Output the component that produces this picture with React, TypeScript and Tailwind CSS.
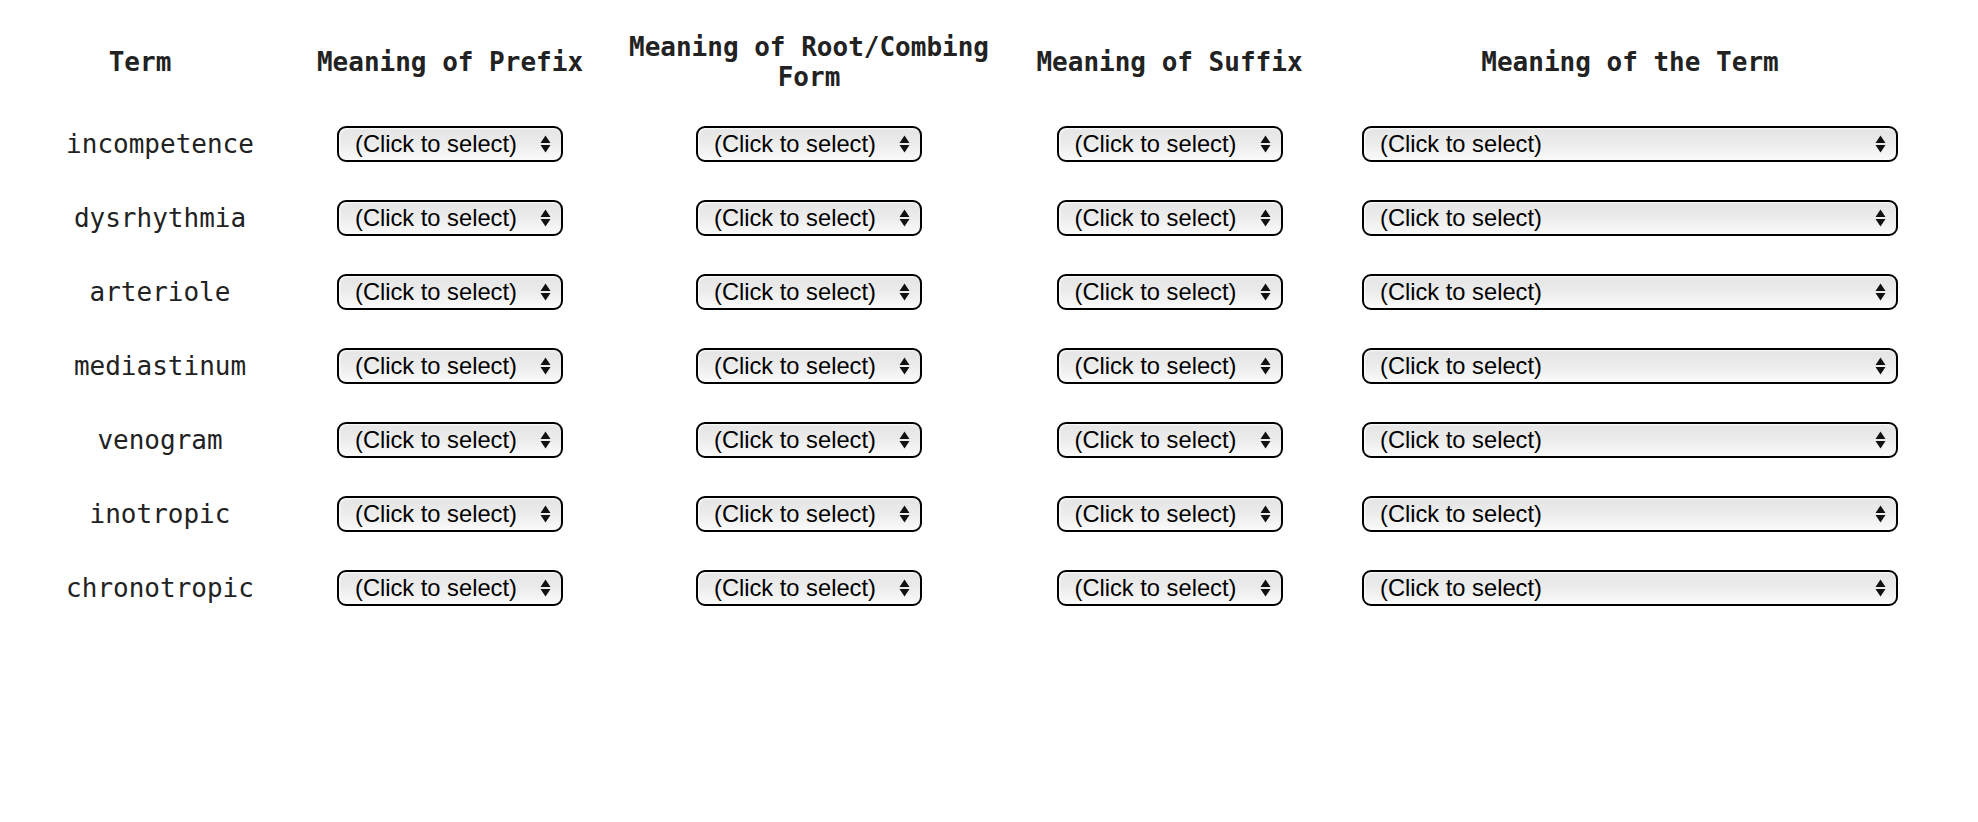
import React from "react"

const terms = [
  "incompetence",
  "dysrhythmia",
  "arteriole",
  "mediastinum",
  "venogram",
  "inotropic",
  "chronotropic",
]

const headers = [
  "Meaning of Prefix",
  "Meaning of Root/Combing Form",
  "Meaning of Suffix",
  "Meaning of the Term",
]

function Arrows() {
  return (
    <svg width="11" height="20" viewBox="0 0 11 20" className="shrink-0">
      <path d="M5.5 1.5 L10.5 9 L0.5 9 Z" fill="#111" />
      <path d="M0.5 11 L10.5 11 L5.5 18.5 Z" fill="#111" />
    </svg>
  )
}

function FakeSelect({ wide }: { wide?: boolean }) {
  return (
    <div
      className={`${wide ? "w-[536px]" : "w-[226px]"} h-[36px] flex items-center justify-between pl-[16px] pr-[10px] border-2 border-black rounded-[9px] bg-[linear-gradient(to_bottom,#e4e4e4_0%,#ebebeb_45%,#fafafa_100%)] shadow-[inset_1px_1px_2px_rgba(255,255,255,0.9)]`}
    >
      <span className="pt-[2px] text-[23.7px] leading-none text-black font-['Liberation_Sans',Arial,sans-serif]">
        (Click to select)
      </span>
      <Arrows />
    </div>
  )
}

export default function App() {
  return (
    <div className="w-[1978px] h-[822px] bg-white font-['DejaVu_Sans_Mono',monospace] text-[#222]">
      <div className="ml-[40px] pt-[16px] grid grid-cols-[240px_340px_378px_343px_578px]">
        <div className="h-[91px] flex items-center justify-center pr-[40px] text-[26px] font-bold leading-[30px]">
          Term
        </div>
        {headers.map((h) => (
          <div
            key={h}
            className="h-[91px] flex items-center justify-center text-center text-[26px] font-bold leading-[30px]"
          >
            {h}
          </div>
        ))}
        {terms.map((t) => (
          <React.Fragment key={t}>
            <div className="h-[74px] flex items-center justify-center text-[26px]">{t}</div>
            <div className="h-[74px] flex items-center justify-center">
              <FakeSelect />
            </div>
            <div className="h-[74px] flex items-center justify-center">
              <FakeSelect />
            </div>
            <div className="h-[74px] flex items-center justify-center">
              <FakeSelect />
            </div>
            <div className="h-[74px] flex items-center justify-center">
              <FakeSelect wide />
            </div>
          </React.Fragment>
        ))}
      </div>
    </div>
  )
}
